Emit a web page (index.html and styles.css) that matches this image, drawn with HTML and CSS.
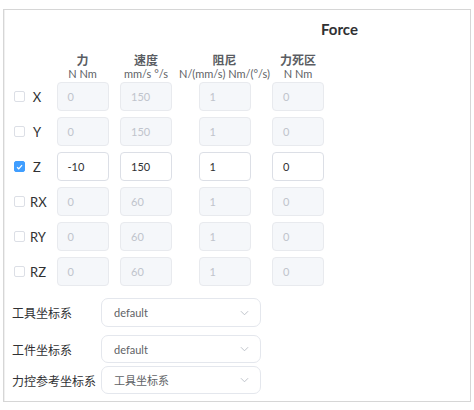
FILE: index.html
```html
<!DOCTYPE html>
<html>
<head>
<meta charset="utf-8">
<link rel="stylesheet" href="styles.css">
</head>
<body>
<div class="panel">
  <div class="title">Force</div>
  <div class="grid">
    <div></div><div></div>
    <div class="head"><div class="hname">力</div><div class="unit">N Nm</div></div>
    <div class="head"><div class="hname">速度</div><div class="unit">mm/s °/s</div></div>
    <div class="head"><div class="hname">阻尼</div><div class="unit">N/(mm/s) Nm/(°/s)</div></div>
    <div class="head"><div class="hname">力死区</div><div class="unit">N Nm</div></div>

    <span class="cb"></span><span class="axis">X</span>
    <div class="inp dis">0</div><div class="inp dis">150</div><div class="inp dis">1</div><div class="inp dis">0</div>

    <span class="cb"></span><span class="axis">Y</span>
    <div class="inp dis">0</div><div class="inp dis">150</div><div class="inp dis">1</div><div class="inp dis">0</div>

    <span class="cb on"><svg viewBox="0 0 10 10" width="10" height="10"><path d="M2.3 5.2 L4.2 7 L7.8 3" fill="none" stroke="#fff" stroke-width="1.4"/></svg></span><span class="axis">Z</span>
    <div class="inp">-10</div><div class="inp">150</div><div class="inp">1</div><div class="inp">0</div>

    <span class="cb"></span><span class="axis">RX</span>
    <div class="inp dis">0</div><div class="inp dis">60</div><div class="inp dis">1</div><div class="inp dis">0</div>

    <span class="cb"></span><span class="axis">RY</span>
    <div class="inp dis">0</div><div class="inp dis">60</div><div class="inp dis">1</div><div class="inp dis">0</div>

    <span class="cb"></span><span class="axis">RZ</span>
    <div class="inp dis">0</div><div class="inp dis">60</div><div class="inp dis">1</div><div class="inp dis">0</div>
  </div>

  <div class="frames">
    <div class="frow r1"><span class="flabel">工具坐标系</span><div class="sel"><span>default</span><svg class="chev" viewBox="0 0 10 6" width="9" height="6"><path d="M1 1 L5 5 L9 1" fill="none" stroke="#b8bcc4" stroke-width="1"/></svg></div></div>
    <div class="frow r2"><span class="flabel">工件坐标系</span><div class="sel"><span>default</span><svg class="chev" viewBox="0 0 10 6" width="9" height="6"><path d="M1 1 L5 5 L9 1" fill="none" stroke="#b8bcc4" stroke-width="1"/></svg></div></div>
    <div class="frow r3"><span class="flabel">力控参考坐标系</span><div class="sel"><span class="cjk">工具坐标系</span><svg class="chev" viewBox="0 0 10 6" width="9" height="6"><path d="M1 1 L5 5 L9 1" fill="none" stroke="#b8bcc4" stroke-width="1"/></svg></div></div>
  </div>
</div>
</body>
</html>
```

FILE: styles.css
```css
html, body {
  margin: 0;
  padding: 0;
  background: #ffffff;
}
body {
  font-family: Lato, "Noto Sans CJK SC", sans-serif;
  color: #303133;
}
.panel {
  margin: 9px 3px 0 3px;
  width: 466px;
  height: 391px;
  border: 1px solid #d6d6d6;
  box-shadow: inset 1px 0 0 #f0f0f0;
}
.title {
  margin-top: 9px;
  padding-left: 317px;
  height: 20px;
  line-height: 20px;
  font-size: 15px;
  font-weight: 700;
  color: #303133;
}
.grid {
  margin-top: 12px;
  padding-left: 10px;
  display: grid;
  grid-template-columns: 16px 21px 63px 64px 93px 54px;
  grid-template-rows: 25px;
  grid-auto-rows: 29px;
  row-gap: 6px;
  align-items: center;
}
.grid > .head {
  align-self: start;
  text-align: center;
  padding-top: 2px;
}
.hname {
  font-family: "Noto Sans CJK SC", sans-serif;
  font-size: 12px;
  font-weight: 700;
  line-height: 14px;
  height: 14px;
  color: #5a5d63;
}
.unit {
  font-size: 11px;
  line-height: 14px;
  height: 14px;
  color: #606266;
  white-space: nowrap;
}
.cb {
  width: 9px;
  height: 9px;
  border: 1px solid #dcdfe6;
  border-radius: 2px;
  background: #fff;
  display: flex;
  align-items: center;
  justify-content: center;
}
.cb.on {
  background: #409eff;
  border-color: #409eff;
}
.axis {
  font-size: 13px;
  color: #303133;
  padding-right: 7px;
  text-align: center;
  white-space: nowrap;
}
.inp {
  justify-self: center;
  box-sizing: border-box;
  width: 52px;
  height: 29px;
  border: 1px solid #dcdfe6;
  border-radius: 4px;
  background: #fff;
  font-size: 11px;
  line-height: 27px;
  padding-left: 10px;
  color: #303133;
}
.inp.dis {
  background: #f5f7fa;
  border-color: #e8eaee;
  color: #c0c4cc;
}
.frames {
  margin-top: 12px;
  padding-left: 8px;
}
.frow {
  display: flex;
  align-items: center;
}
.r2 { margin-top: 8px; }
.r3 { margin-top: 3px; }
.flabel {
  width: 89px;
  font-family: "Noto Sans CJK SC", sans-serif;
  font-size: 12px;
  color: #303133;
  white-space: nowrap;
}
.sel {
  box-sizing: border-box;
  width: 160px;
  height: 29px;
  border: 1px solid #e4e7ed;
  border-radius: 7px;
  display: flex;
  align-items: center;
  justify-content: space-between;
  padding: 0 11px 0 12px;
  font-size: 11px;
  color: #606266;
}
.r2 .sel, .r3 .sel { height: 28px; }
.cjk {
  font-family: "Noto Sans CJK SC", sans-serif;
}
.chev { display: block; }
```
